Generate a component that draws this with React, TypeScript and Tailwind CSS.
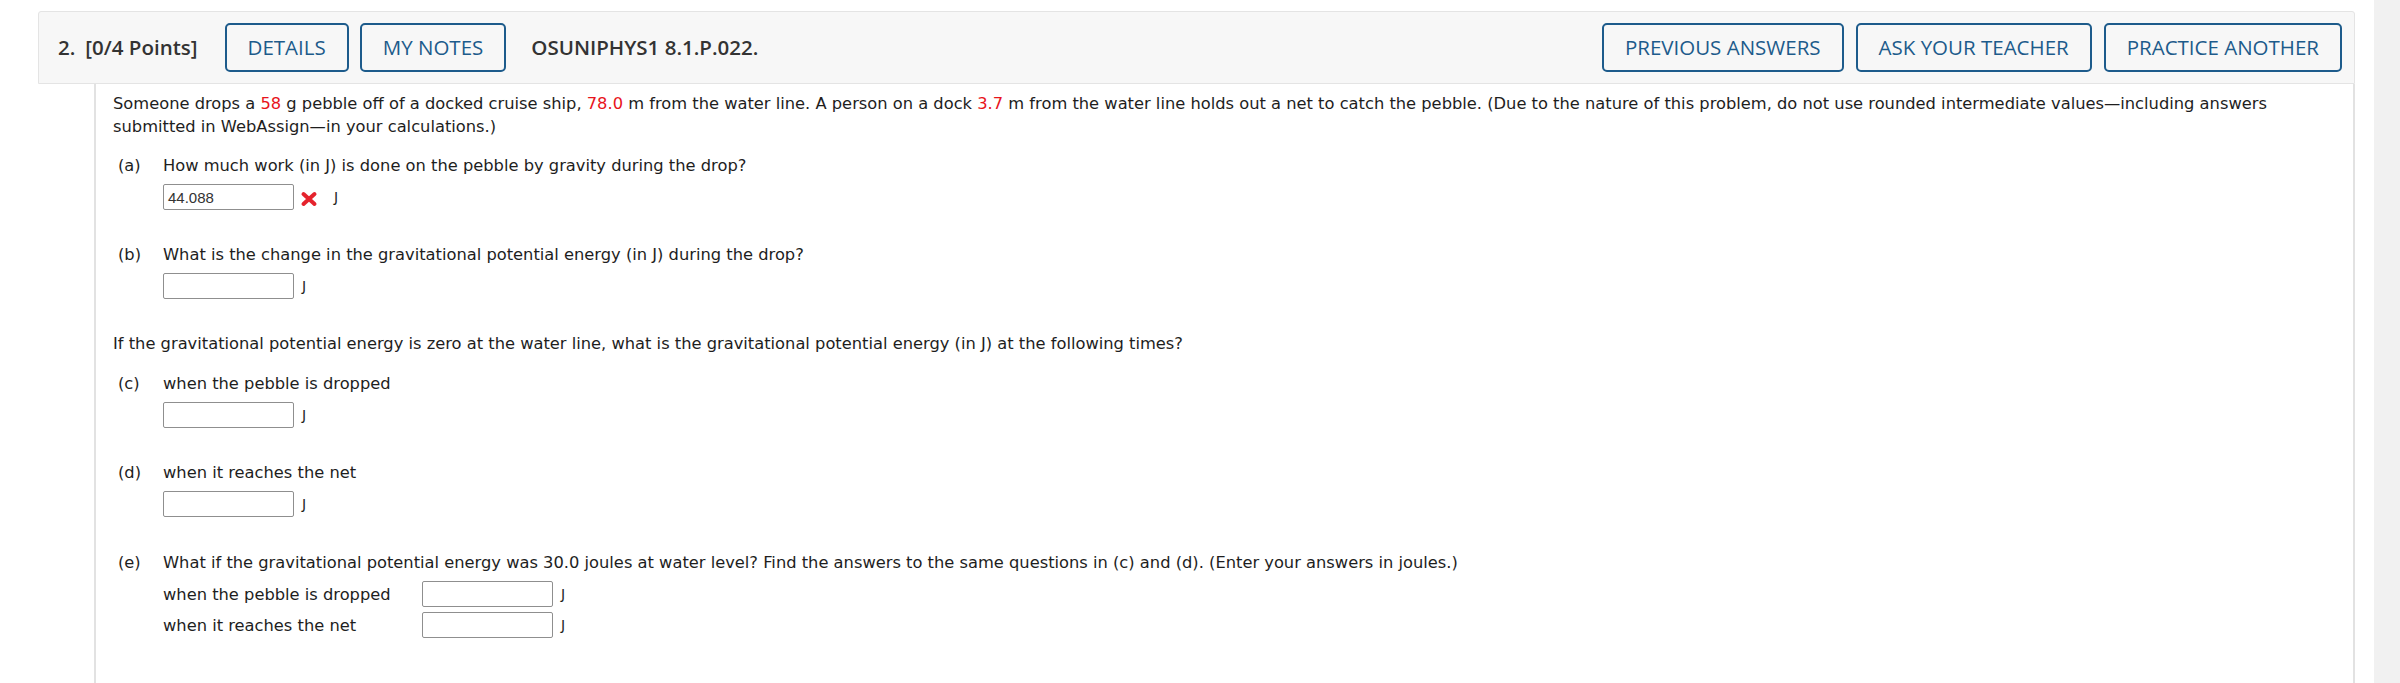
import React from 'react'

const body = { fontFamily: "'DejaVu Sans', Verdana, sans-serif" }
const head = { fontFamily: "'Open Sans', 'Liberation Sans', sans-serif" }

function Red({ children }: { children: React.ReactNode }) {
  return <span className="text-[#e8141c]">{children}</span>
}

function AnswerBox({ value }: { value?: string }) {
  return (
    <div
      className="w-[131px] h-[26px] border border-[#8f8f8f] rounded-[2px] bg-white px-[4px] flex items-center text-[15px] text-[#333]"
      style={{ fontFamily: "'Liberation Sans', Arial, sans-serif" }}
    >
      {value}
    </div>
  )
}

function WrongMark() {
  return (
    <svg width="18" height="16" viewBox="0 0 18 16" className="ml-[6px] mt-[4px]">
      <path d="M3.5 3 L14.5 13 M14.5 3 L3.5 13" stroke="#e5232d" strokeWidth="4" strokeLinecap="round" />
    </svg>
  )
}

function Unit({ className = '' }: { className?: string }) {
  return <span className={`text-[14px] ${className}`}>J</span>
}

function Part({
  label,
  question,
  value,
  wrong,
  className = '',
}: {
  label: string
  question: string
  value?: string
  wrong?: boolean
  className?: string
}) {
  return (
    <div className={`flex pl-[5px] ${className}`}>
      <div className="w-[45px] shrink-0">{label}</div>
      <div>
        <div>{question}</div>
        <div className="flex items-center mt-[7px]">
          <AnswerBox value={value} />
          {wrong ? (
            <>
              <WrongMark />
              <Unit className="ml-[16px]" />
            </>
          ) : (
            <Unit className="ml-[8px]" />
          )}
        </div>
      </div>
    </div>
  )
}

export default function App() {
  const buttons = ['PREVIOUS ANSWERS', 'ASK YOUR TEACHER', 'PRACTICE ANOTHER']

  return (
    <div className="flex w-[2400px] h-[683px] overflow-hidden bg-white">
      <div className="flex-1 flex flex-col pl-[38px] pr-[19px] pt-[11px]">
        {/* Question header */}
        <div
          className="h-[73px] shrink-0 flex items-center bg-[#f7f7f7] border border-[#e4e4e4] rounded-t-[3px] pl-[19px] pr-[12px] text-[#333]"
          style={head}
        >
          <span className="text-[20.5px] font-semibold">2.</span>
          <span className="text-[20.5px] font-semibold ml-[10px]">[0/4 Points]</span>
          <div className="flex gap-[11px] ml-[27px]">
            {['DETAILS', 'MY NOTES'].map((b) => (
              <button
                key={b}
                className="h-[49px] px-[21px] border-2 border-[#1d5b8b] rounded-[5px] text-[20.5px] text-[#1d5b8b]"
              >
                {b}
              </button>
            ))}
          </div>
          <span className="text-[20.5px] font-semibold ml-[25px]">OSUNIPHYS1 8.1.P.022.</span>
          <div className="flex gap-[12px] ml-auto">
            {buttons.map((b) => (
              <button
                key={b}
                className="h-[49px] px-[21px] border-2 border-[#1d5b8b] rounded-[5px] text-[20.5px] text-[#1d5b8b]"
              >
                {b}
              </button>
            ))}
          </div>
        </div>

        {/* Question body */}
        <div
          className="flex-1 ml-[56px] border-x-2 border-[#e2e2e2] pl-[17px] pr-[50px] pt-[8px] text-[16.3px] leading-[23px] text-[#1e1e1e]"
          style={body}
        >
          <p>
            Someone drops a <Red>58</Red> g pebble off of a docked cruise ship, <Red>78.0</Red> m from the water
            line. A person on a dock <Red>3.7</Red> m from the water line holds out a net to catch the pebble. (Due
            to the nature of this problem, do not use rounded intermediate values—including answers submitted in
            WebAssign—in your calculations.)
          </p>

          <Part
            className="mt-[16px]"
            label="(a)"
            question="How much work (in J) is done on the pebble by gravity during the drop?"
            value="44.088"
            wrong
          />
          <Part
            className="mt-[33px]"
            label="(b)"
            question="What is the change in the gravitational potential energy (in J) during the drop?"
          />

          <p className="mt-[33px]">
            If the gravitational potential energy is zero at the water line, what is the gravitational potential
            energy (in J) at the following times?
          </p>

          <Part className="mt-[17px]" label="(c)" question="when the pebble is dropped" />
          <Part className="mt-[33px]" label="(d)" question="when it reaches the net" />

          <div className="flex pl-[5px] mt-[34px]">
            <div className="w-[45px] shrink-0">(e)</div>
            <div>
              <div>
                What if the gravitational potential energy was 30.0 joules at water level? Find the answers to the
                same questions in (c) and (d). (Enter your answers in joules.)
              </div>
              <div className="flex items-center mt-[7px]">
                <div className="w-[259px]">when the pebble is dropped</div>
                <AnswerBox />
                <Unit className="ml-[8px]" />
              </div>
              <div className="flex items-center mt-[5px]">
                <div className="w-[259px]">when it reaches the net</div>
                <AnswerBox />
                <Unit className="ml-[8px]" />
              </div>
            </div>
          </div>
        </div>
      </div>

      {/* scrollbar track */}
      <div className="w-[26px] shrink-0 bg-[#f1f1f1]" />
    </div>
  )
}
